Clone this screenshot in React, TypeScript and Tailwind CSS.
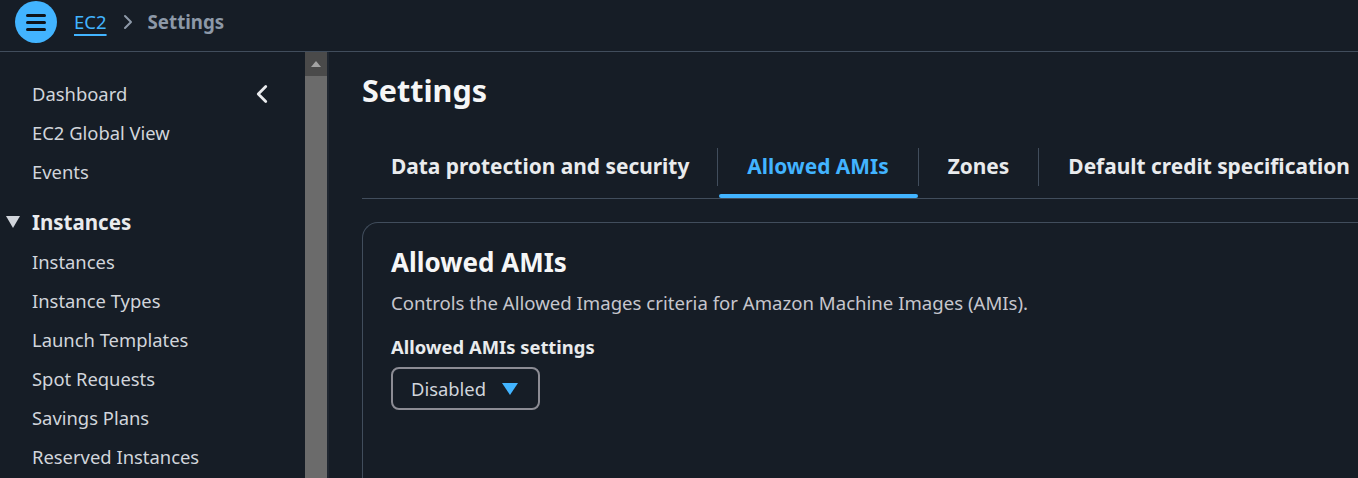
import { ChevronLeft, ChevronRight } from "lucide-react";

const navTop = ["Dashboard", "EC2 Global View", "Events"];
const navInstances = [
  "Instances",
  "Instance Types",
  "Launch Templates",
  "Spot Requests",
  "Savings Plans",
  "Reserved Instances",
];

function Header() {
  return (
    <header className="h-[52px] border-b border-[#414d5c] px-[15px] shrink-0">
      <div className="h-[42px] mt-[1px] flex items-center">
        <button className="w-[42px] h-[42px] rounded-full bg-[#42b4ff] flex flex-col items-center justify-center gap-[4px]">
          <span className="block w-[20px] h-[3px] bg-[#0f141a] rounded-sm" />
          <span className="block w-[20px] h-[3px] bg-[#0f141a] rounded-sm" />
          <span className="block w-[20px] h-[3px] bg-[#0f141a] rounded-sm" />
        </button>
        <a className="ml-[17px] text-[18.5px] text-[#42b4ff] underline underline-offset-[5px] decoration-[1.5px]">
          EC2
        </a>
        <ChevronRight size={24} strokeWidth={2} className="ml-[9px] text-[#8d99a8]" />
        <span className="ml-[8px] text-[18.7px] font-bold text-[#8d99a8]">Settings</span>
      </div>
    </header>
  );
}

function Sidebar() {
  return (
    <aside className="w-[305px] shrink-0 pt-[22px] relative">
      <ChevronLeft size={30} strokeWidth={2.25} className="absolute left-[247px] top-[27px] text-[#e9ebed]" />
      <ul className="flex flex-col">
        {navTop.map((item) => (
          <li key={item} className="pl-[32px] h-[39px] flex items-center text-[18.4px] text-[#d1d5db]">
            {item}
          </li>
        ))}
      </ul>
      <div className="flex items-center h-[40px] mt-[11px]">
        <svg width="14" height="12" viewBox="0 0 14 12" className="ml-[6px] mr-[12px]">
          <polygon points="0,0 14,0 7,12" fill="#d1d5db" />
        </svg>
        <span className="text-[20.5px] font-bold text-[#e9ebed]">Instances</span>
      </div>
      <ul className="flex flex-col">
        {navInstances.map((item) => (
          <li key={item} className="pl-[32px] h-[39px] flex items-center text-[18.4px] text-[#d1d5db]">
            {item}
          </li>
        ))}
      </ul>
    </aside>
  );
}

function Scrollbar() {
  return (
    <div className="w-[24px] shrink-0 flex flex-col bg-[#6b6b6b] border-r-[2px] border-[#1f2630]">
      <div className="h-[24px] bg-[#4a4a4a] flex items-center justify-center">
        <svg width="10" height="6" viewBox="0 0 10 6">
          <polygon points="0,6 10,6 5,0" fill="#a3a3a3" />
        </svg>
      </div>
    </div>
  );
}

const tabs = [
  { label: "Data protection and security", active: false },
  { label: "Allowed AMIs", active: true },
  { label: "Zones", active: false },
  { label: "Default credit specification", active: false },
];

function Tabs() {
  return (
    <div className="flex border-b border-[#414d5c] h-[53px]">
      {tabs.map((tab, i) => (
        <div key={tab.label} className="flex items-start">
          {i > 0 && <div className="w-px bg-[#414d5c] mt-[2px] h-[38px]" />}
          <div
            className={
              "relative h-[52px] pt-[5px] text-[20.9px] leading-[30px] font-bold whitespace-nowrap " +
              (i === 0 ? "pl-[29px] pr-[28px] " : "px-[29px] ") +
              (tab.active ? "text-[#42b4ff]" : "text-[#e9ebed]")
            }
          >
            {tab.label}
            {tab.active && (
              <span className="absolute left-[1px] right-0 bottom-0 h-[4px] rounded-full bg-[#42b4ff]" />
            )}
          </div>
        </div>
      ))}
    </div>
  );
}

function Main() {
  return (
    <main className="flex-1 min-w-0 pl-[33px] pt-[18px] overflow-hidden">
      <h1 className="text-[30.5px] font-bold text-[#f5f6f7] leading-[40px]">Settings</h1>
      <div className="mt-[36px]">
        <Tabs />
      </div>
      <section className="mt-[23px] border border-[#414d5c] border-r-0 border-b-0 rounded-tl-[16px] pl-[28px] pt-[22px] h-[300px]">
        <h2 className="text-[26px] font-bold text-[#f5f6f7] leading-[34px]">Allowed AMIs</h2>
        <p className="mt-[10px] text-[18.6px] leading-[28px] text-[#c6c6cd]">
          Controls the Allowed Images criteria for Amazon Machine Images (AMIs).
        </p>
        <label className="block mt-[16px] text-[18.4px] leading-[28px] font-bold text-[#e9ebed]">
          Allowed AMIs settings
        </label>
        <button className="mt-[6px] w-[149px] h-[43px] border-[2px] border-[#8c8c94] rounded-[8px] flex items-center pl-[18px] text-[18.4px] text-[#d1d5db]">
          Disabled
          <svg width="16" height="12" viewBox="0 0 16 12" className="ml-[16px]">
            <polygon points="0,0 16,0 8,12" fill="#42b4ff" />
          </svg>
        </button>
      </section>
    </main>
  );
}

export default function App() {
  return (
    <div
      className="w-[1358px] h-[478px] bg-[#161d26] flex flex-col overflow-hidden"
      style={{ fontFamily: '"Noto Sans", "Open Sans", sans-serif' }}
    >
      <Header />
      <div className="flex flex-1 min-h-0">
        <Sidebar />
        <Scrollbar />
        <Main />
      </div>
    </div>
  );
}
